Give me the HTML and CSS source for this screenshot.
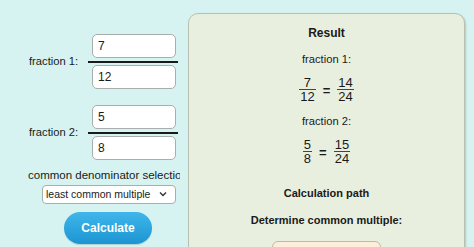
FILE: index.html
```html
<!DOCTYPE html>
<html>
<head>
<meta charset="utf-8">
<link rel="stylesheet" href="styles.css">
</head>
<body>
<div class="page">
  <div class="inputs">
    <div class="frac-row">
      <div class="frac-label">fraction 1:</div>
      <div class="frac-stack">
        <input class="num-input" type="text" value="7">
        <div class="frac-bar"></div>
        <input class="num-input" type="text" value="12">
      </div>
    </div>
    <div class="frac-row second">
      <div class="frac-label">fraction 2:</div>
      <div class="frac-stack">
        <input class="num-input" type="text" value="5">
        <div class="frac-bar"></div>
        <input class="num-input" type="text" value="8">
      </div>
    </div>
    <div class="mode-label">common denominator selection:</div>
    <div class="select-wrap">
      <select class="mode-select">
        <option>least common multiple</option>
      </select>
      <svg class="chevron" width="8" height="6" viewBox="0 0 8 6"><path d="M1 1.5 L4 4.5 L7 1.5" fill="none" stroke="#333" stroke-width="1.4"/></svg>
    </div>
    <button class="calc-btn">Calculate</button>
  </div>
  <div class="result">
    <div class="result-title">Result</div>
    <div class="result-label">fraction 1:</div>
    <div class="equation">
      <div class="frac"><span class="num">7</span><span class="den">12</span></div>
      <span class="eq">=</span>
      <div class="frac"><span class="num">14</span><span class="den">24</span></div>
    </div>
    <div class="result-label second">fraction 2:</div>
    <div class="equation">
      <div class="frac"><span class="num">5</span><span class="den">8</span></div>
      <span class="eq">=</span>
      <div class="frac"><span class="num">15</span><span class="den">24</span></div>
    </div>
    <div class="path-title">Calculation path</div>
    <div class="path-sub">Determine common multiple:</div>
    <div class="path-box"></div>
  </div>
</div>
</body>
</html>
```

FILE: styles.css
```css
html, body {
  margin: 0;
  padding: 0;
}
body {
  background: #d6f3f2;
  font-family: "Liberation Sans", Arial, sans-serif;
  color: #1a1a1a;
  width: 474px;
  height: 247px;
  overflow: hidden;
}
.page {
  display: flex;
  align-items: flex-start;
}
.inputs {
  width: 188px;
  flex: none;
  display: flex;
  flex-direction: column;
  padding-top: 34px;
}
.frac-row {
  display: flex;
  align-items: center;
  padding-left: 29px;
}
.frac-row.second {
  margin-top: 16px;
}
.frac-label {
  width: 59px;
  font-size: 11.2px;
  line-height: 13px;
}
.frac-stack {
  width: 90px;
  display: flex;
  flex-direction: column;
  align-items: flex-end;
}
.num-input {
  box-sizing: border-box;
  width: 84px;
  height: 24px;
  margin: 0 2px 0 0;
  border: 1px solid #a8aeab;
  border-radius: 5px;
  background: #fff;
  padding: 0 5px;
  font-family: "Liberation Sans", Arial, sans-serif;
  font-size: 12px;
  color: #1a1a1a;
  outline: none;
}
.frac-bar {
  align-self: stretch;
  height: 2px;
  background: #1a1a1a;
  margin: 3px 0 2px;
}
.mode-label {
  margin: 9px 0 0 28px;
  width: 152px;
  overflow: hidden;
  white-space: nowrap;
  font-size: 11.5px;
  line-height: 13px;
}
.select-wrap {
  position: relative;
  margin: 2px 0 0 42px;
  width: 134px;
  height: 19px;
}
.mode-select {
  appearance: none;
  -webkit-appearance: none;
  box-sizing: border-box;
  width: 134px;
  height: 19px;
  border: 1px solid #a8aeab;
  border-radius: 4px;
  background: #fff;
  padding: 0 0 0 3px;
  font-family: "Liberation Sans", Arial, sans-serif;
  font-size: 10.5px;
  color: #1a1a1a;
  outline: none;
}
.chevron {
  position: absolute;
  right: 9px;
  top: 7px;
  pointer-events: none;
}
.calc-btn {
  margin: 9px 0 0 64px;
  width: 88px;
  height: 32px;
  border: none;
  border-radius: 16px;
  background: linear-gradient(#40b6ea, #1b95d2);
  box-shadow: 0 1px 1px rgba(0, 0, 0, 0.15);
  color: #fff;
  font-family: "Liberation Sans", Arial, sans-serif;
  font-weight: bold;
  font-size: 12px;
  padding: 0;
}
.result {
  box-sizing: border-box;
  margin-top: 13px;
  width: 277px;
  height: 260px;
  flex: none;
  background: #e9efdf;
  border: 1px solid #b8c0b2;
  border-radius: 10px;
  box-shadow: 1px 1px 2px rgba(0, 0, 0, 0.18);
  display: flex;
  flex-direction: column;
  align-items: center;
  padding-top: 12px;
}
.result-title {
  font-weight: bold;
  font-size: 12px;
  line-height: 14px;
}
.result-label {
  font-size: 11.2px;
  line-height: 13px;
  margin-top: 13px;
}
.result-label.second {
  margin-top: 12px;
}
.equation {
  display: flex;
  align-items: center;
  margin-top: 11px;
}
.frac {
  display: flex;
  flex-direction: column;
  align-items: stretch;
  text-align: center;
  font-size: 13px;
}
.num {
  line-height: 12px;
  padding: 0 1px;
  border-bottom: 1px solid #444;
}
.den {
  line-height: 12px;
  padding: 1px 1px 0;
}
.eq {
  font-size: 13px;
  font-weight: bold;
  margin: 0 7px;
}
.path-title {
  font-weight: bold;
  font-size: 11px;
  line-height: 13px;
  margin-top: 22px;
}
.path-sub {
  font-weight: bold;
  font-size: 11px;
  line-height: 13px;
  margin-top: 14px;
}
.path-box {
  box-sizing: border-box;
  margin-top: 14px;
  width: 109px;
  height: 30px;
  background: #fdeedc;
  border: 1px solid #c4b8a6;
  border-radius: 6px;
}
```
